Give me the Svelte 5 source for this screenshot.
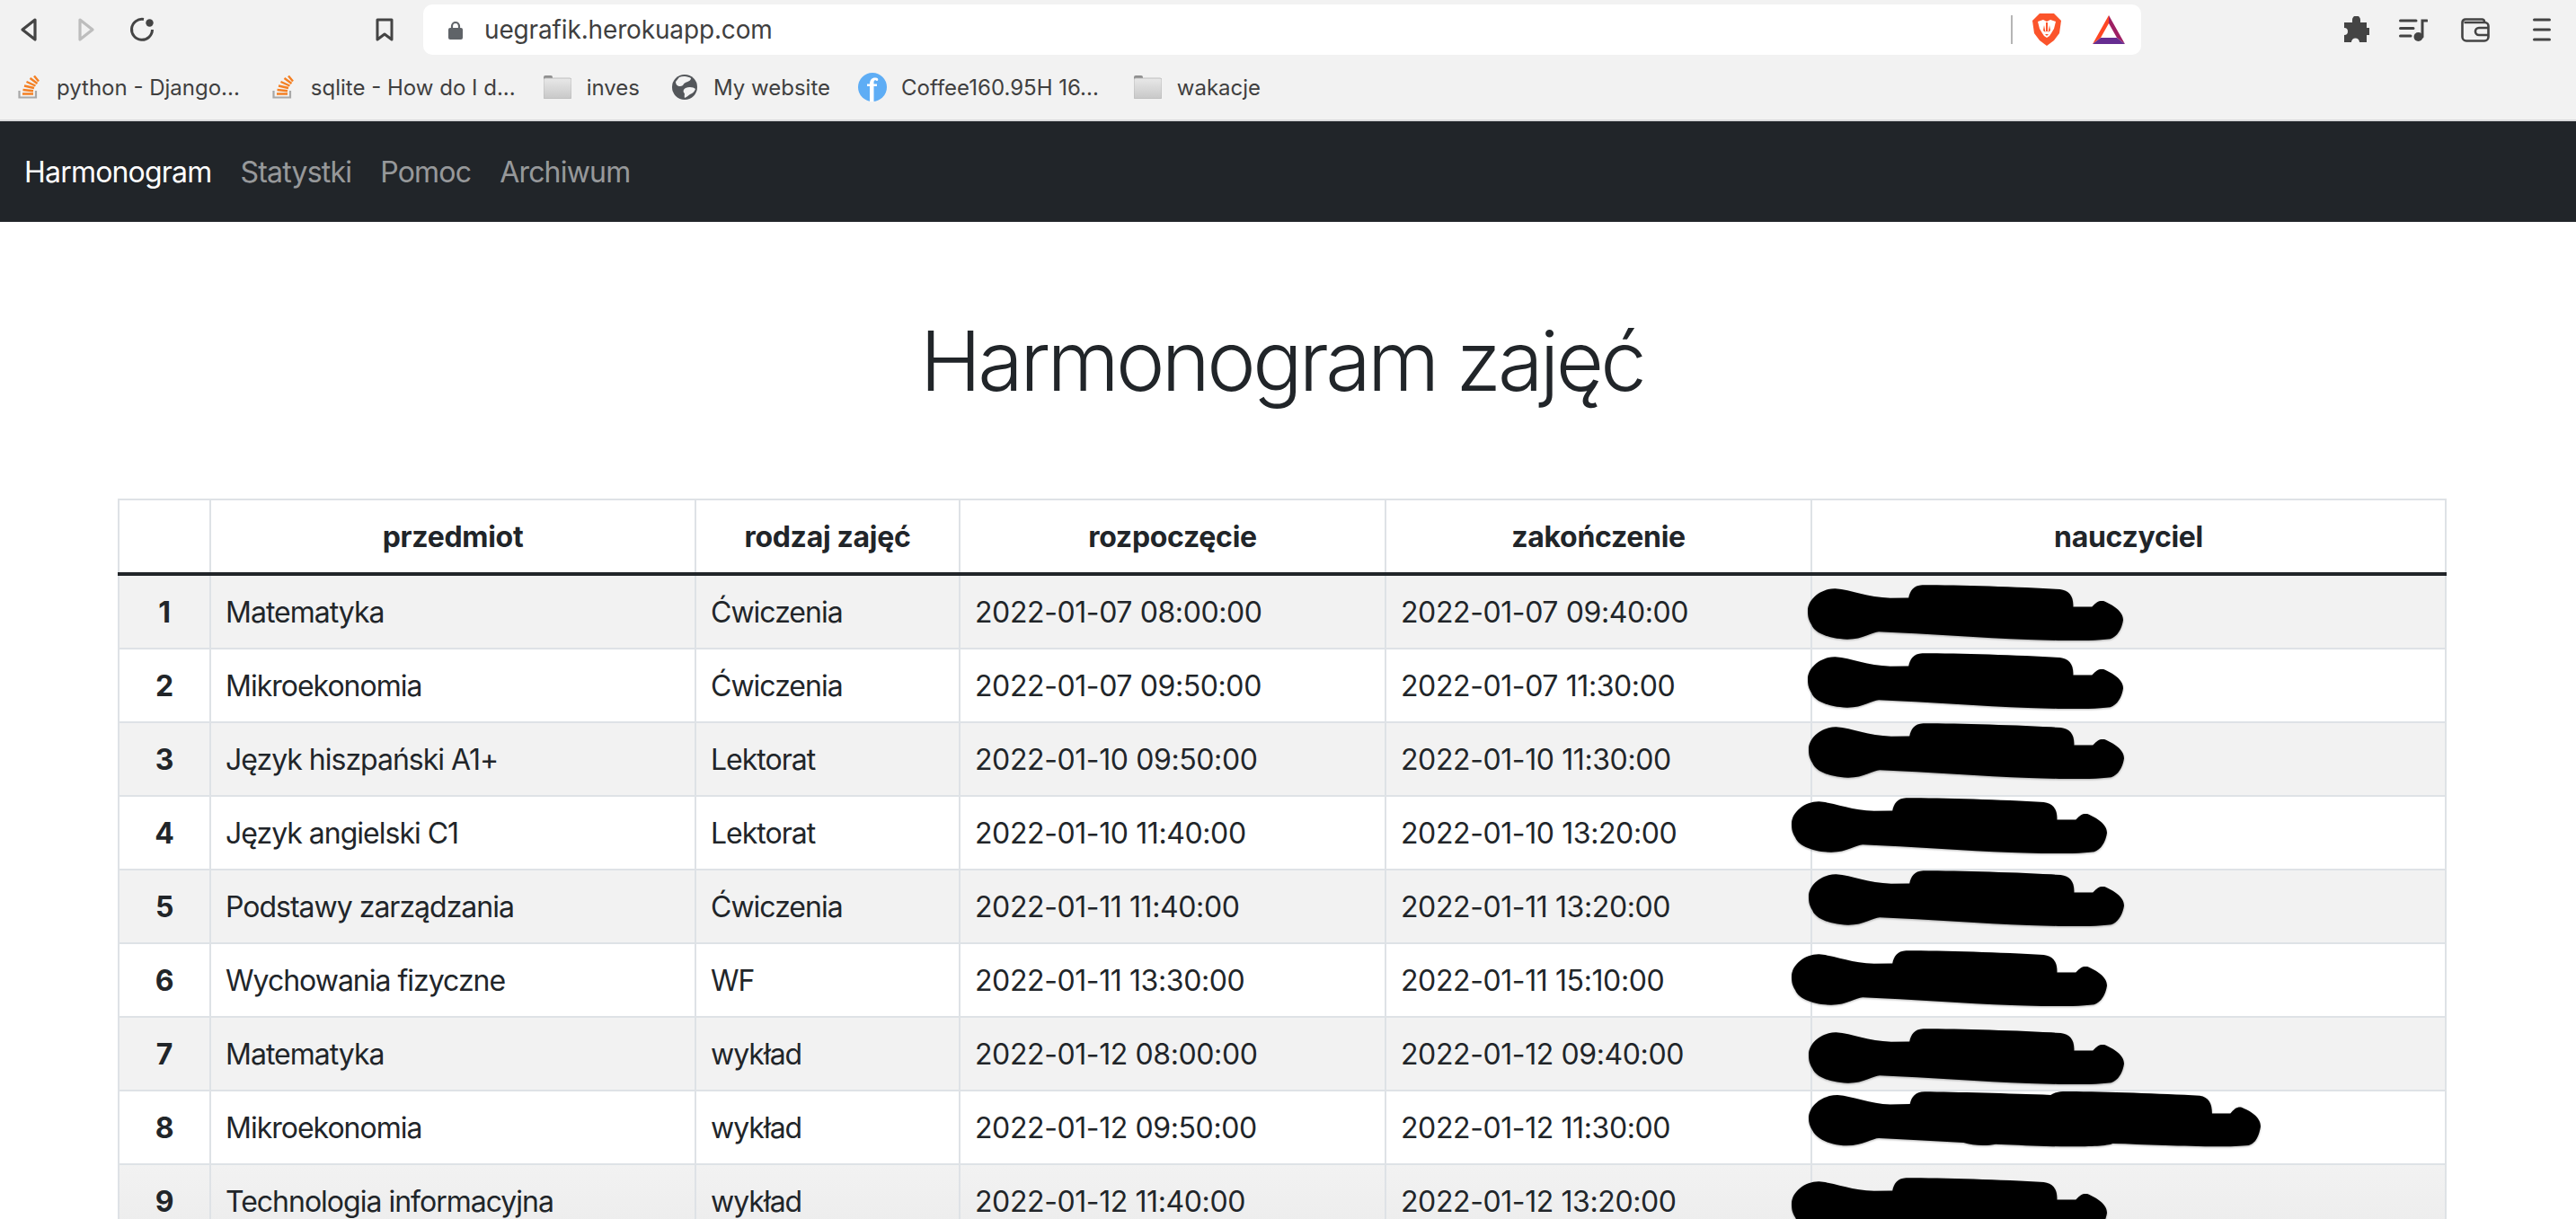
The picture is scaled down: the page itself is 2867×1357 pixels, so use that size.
<script>
	// bookmarks bar entries
	const bookmarks = [
		{ icon: 'so', label: 'python - Django...' },
		{ icon: 'so', label: 'sqlite - How do I d...' },
		{ icon: 'folder', label: 'inves' },
		{ icon: 'globe', label: 'My website' },
		{ icon: 'coffee', label: 'Coffee160.95H 16...' },
		{ icon: 'folder', label: 'wakacje' }
	];

	const columns = ['', 'przedmiot', 'rodzaj zajęć', 'rozpoczęcie', 'zakończenie', 'nauczyciel'];

	// dx, dy: where the black marker scribble sits in the teacher cell
	const rows = [
		{ subject: 'Matematyka', kind: 'Ćwiczenia', start: '2022-01-07 08:00:00', end: '2022-01-07 09:40:00', dx: -5, dy: 10 },
		{ subject: 'Mikroekonomia', kind: 'Ćwiczenia', start: '2022-01-07 09:50:00', end: '2022-01-07 11:30:00', dx: -5, dy: 4 },
		{ subject: 'Język hiszpański A1+', kind: 'Lektorat', start: '2022-01-10 09:50:00', end: '2022-01-10 11:30:00', dx: -4, dy: 0 },
		{ subject: 'Język angielski C1', kind: 'Lektorat', start: '2022-01-10 11:40:00', end: '2022-01-10 13:20:00', dx: -23, dy: 1 },
		{ subject: 'Podstawy zarządzania', kind: 'Ćwiczenia', start: '2022-01-11 11:40:00', end: '2022-01-11 13:20:00', dx: -4, dy: 0 },
		{ subject: 'Wychowania fizyczne', kind: 'WF', start: '2022-01-11 13:30:00', end: '2022-01-11 15:10:00', dx: -23, dy: 7 },
		{ subject: 'Matematyka', kind: 'wykład', start: '2022-01-12 08:00:00', end: '2022-01-12 09:40:00', dx: -4, dy: 12 },
		{ subject: 'Mikroekonomia', kind: 'wykład', start: '2022-01-12 09:50:00', end: '2022-01-12 11:30:00', dx: -4, dy: 0, long: true },
		{ subject: 'Technologia informacyjna', kind: 'wykład', start: '2022-01-12 11:40:00', end: '2022-01-12 13:20:00', dx: -23, dy: 14 }
	];
</script>

<div class="page">
	<header class="chrome">
		<div class="toolbar">
			<svg class="back" width="20" height="28" viewBox="0 0 20 28"><path d="M17 3 L3 14 L17 25 Z" fill="none" stroke="#444" stroke-width="3.2" stroke-linejoin="round" /></svg>
			<svg class="forward" width="20" height="28" viewBox="0 0 20 28"><path d="M3 3 L17 14 L3 25 Z" fill="none" stroke="#bdbdbd" stroke-width="3.2" stroke-linejoin="round" /></svg>
			<svg class="reload" width="28" height="28" viewBox="0 0 28 28"><path d="M16 2.5 A11.5 11.5 0 1 0 25.5 14" fill="none" stroke="#444" stroke-width="3" /><circle cx="22.5" cy="6.5" r="4.2" fill="#444" /></svg>
			<svg class="mark" width="22" height="26" viewBox="0 0 22 26"><path d="M3 2 H19 V24 L11 18 L3 24 Z" fill="none" stroke="#444" stroke-width="3" stroke-linejoin="round" /></svg>
			<div class="urlbar">
				<svg class="lock" width="16" height="21" viewBox="0 0 16 21"><path d="M4 9 V6 a4 4 0 0 1 8 0 V9" fill="none" stroke="#5f6368" stroke-width="2.2" /><rect x="0" y="8" width="16" height="13" rx="2" fill="#5f6368" /></svg>
				<span class="url">uegrafik.herokuapp.com</span>
				<span class="sep"></span>
				<svg class="brave" width="32" height="36" viewBox="0 0 32 36">
					<path d="M8 0 H24 L28 4 L32 8 L30 22 L24 30 L16 36 L8 30 L2 22 L0 8 L4 4 Z" fill="#fb542b" />
					<path d="M6 9 L12 7 L16 9 L20 7 L26 9 L24 17 L21 22 L19 25 L16 27 L13 25 L11 22 L8 17 Z" fill="#fff" />
					<path d="M13 13 L14.5 21 L12 19 Z M19 13 L17.5 21 L20 19 Z M14 23 H18 L16 25 Z M15 10 H17 V20 H15 Z" fill="#fb542b" />
				</svg>
				<svg class="bat" width="36" height="32" viewBox="0 0 36 32">
					<path d="M18 0 L36 32 L27 25 L18 9 Z" fill="#9e1f63" />
					<path d="M18 0 V9 L9 25 L0 32 Z" fill="#ff4724" />
					<path d="M9 25 H27 L36 32 H0 Z" fill="#662d91" />
				</svg>
			</div>
			<svg class="puzzle" width="30" height="30" viewBox="0 0 30 30"><path d="M11 4 a4.5 4.5 0 0 1 9 0 V7 H27 V13 H29 a4 4 0 0 1 0 8 H27 V29 H19 a4 4 0 0 0 -9 0 H2 V21 a4 4 0 0 0 0 -8 V7 H11 Z" fill="#444" /></svg>
			<svg class="playlist" width="32" height="25" viewBox="0 0 32 25"><path d="M1.5 2 H19 M1.5 10.5 H16 M1.5 19 H13" stroke="#444" stroke-width="3" stroke-linecap="round" fill="none" /><path d="M26 20 V2 H31" stroke="#444" stroke-width="3" stroke-linecap="round" fill="none" /><circle cx="21.5" cy="20" r="5" fill="#444" /></svg>
			<svg class="wallet" width="32" height="27" viewBox="0 0 32 27"><path d="M26 5 V4 a2.5 2.5 0 0 0 -2.5 -2.5 H5 A3.5 3.5 0 0 0 1.5 5 V21 A4.5 4.5 0 0 0 6 25.5 H26 A4.5 4.5 0 0 0 30.5 21 V9 A4 4 0 0 0 26.5 5 H3.5" fill="none" stroke="#444" stroke-width="2.6" /><path d="M30 11 H20 a4 4 0 0 0 0 8 H30" fill="none" stroke="#444" stroke-width="2.6" /></svg>
			<svg class="menu" width="20" height="26" viewBox="0 0 20 26"><path d="M1.5 2 H18.5 M1.5 13 H18.5 M1.5 24 H18.5" stroke="#444" stroke-width="3" stroke-linecap="round" /></svg>
		</div>

		<div class="bookmarks">
			{#each bookmarks as b}
				<div class="bookmark {b.icon}">
					{#if b.icon === 'so'}
						<svg width="24" height="26" viewBox="0 0 24 26">
							<path d="M1.5 17 V24.5 H20 V17" fill="none" stroke="#a8a8a8" stroke-width="2.2" />
							<path d="M5 20.5 H17 M5.5 16 L17 17.2 M7 11.5 L18 14 M9.5 7 L19.5 11.5 M13.5 3 L21.5 9 M18 0.5 L23 6.5" stroke="#f48024" stroke-width="2.4" fill="none" />
						</svg>
					{:else if b.icon === 'folder'}
						<svg width="31" height="26" viewBox="0 0 31 26">
							<defs>
								<linearGradient id="fold" x1="0" y1="0" x2="0" y2="1"><stop offset="0" stop-color="#e8e8e8" /><stop offset="1" stop-color="#c8c8c8" /></linearGradient>
							</defs>
							<path d="M0 2 a2 2 0 0 1 2 -2 H8 a2 2 0 0 1 2 2 H10 V4 H0 Z" fill="#8f8f8f" />
							<rect x="0" y="3" width="31" height="23" rx="2" fill="url(#fold)" stroke="#b4b4b4" stroke-width="0.8" />
						</svg>
					{:else if b.icon === 'globe'}
						<svg width="28" height="28" viewBox="0 0 28 28">
							<circle cx="14" cy="14" r="14" fill="#53565a" />
							<path d="M8 3 C12 1 18 2 21 4 C21 7 17 8 15 9 C12 10 13 13 9 13 C6 13 4 11 4 8 Z M15 15 C19 13 24 14 26 16 C25 19 23 21 20 22 C18 23 17 25 14 26 C13 23 15 22 13 20 C12 18 13 16 15 15 Z" fill="#f2f2f2" />
						</svg>
					{:else}
						<svg width="32" height="32" viewBox="0 0 32 32">
							<circle cx="16" cy="16" r="16" fill="#5eadf5" />
							<path d="M13 32 V15 H10 V12.5 H13 C13 7 16 5 20 5.5 C22.5 6 23 8 21.5 9 C20 9 20 8 18.8 8.3 C17.5 8.6 17.5 10 17.5 12.5 H21 V15 H17.5 V32 Z" fill="#fff" />
						</svg>
					{/if}
					<span>{b.label}</span>
				</div>
			{/each}
		</div>
	</header>

	<nav class="navbar">
		<a class="active" href="#top">Harmonogram</a>
		<a href="#top">Statystki</a>
		<a href="#top">Pomoc</a>
		<a href="#top">Archiwum</a>
	</nav>

	<h1>Harmonogram zajęć</h1>

	<table>
		<colgroup>
			<col style="width: 102px" />
			<col style="width: 540px" />
			<col style="width: 294px" />
			<col style="width: 474px" />
			<col style="width: 474px" />
			<col style="width: 706px" />
		</colgroup>
		<thead>
			<tr>
				{#each columns as c}
					<th>{c}</th>
				{/each}
			</tr>
		</thead>
		<tbody>
			{#each rows as r, i}
				<tr class:odd={i % 2 === 0} class:fade={i === 8}>
					<th>{i + 1}</th>
					<td class="word">{r.subject}</td>
					<td class="word">{r.kind}</td>
					<td class="date">{r.start}</td>
					<td class="date">{r.end}</td>
					<td class="teacher">
						{#if r.long}
							<svg class="scribble" style="left: {r.dx}px; top: {r.dy}px" width="503" height="62" viewBox="122 796 986 185" preserveAspectRatio="none">
								<path d="M122 885 C122 845 150 808 185 808 C220 812 255 838 300 839 L343 838 C346 815 355 797 375 797 C440 798 560 803 650 808 C660 797 670 796 690 796 C770 797 890 803 975 810 C995 815 1002 835 1002 869 L1042 869 C1050 855 1055 847 1065 848 C1085 860 1108 880 1108 912 C1105 940 1098 968 1082 975 C1040 982 960 978 900 975 C860 973 820 970 785 969 C770 980 700 980 640 978 C600 976 560 972 530 971 C510 978 480 976 460 966 C400 962 340 955 275 951 C260 952 240 976 205 976 C170 975 140 955 130 925 C124 910 122 900 122 885 Z" />
							</svg>
						{:else}
							<svg class="scribble" style="left: {r.dx}px; top: {r.dy}px" width="351" height="62" viewBox="120 363 688 185" preserveAspectRatio="none">
								<path d="M120 450 C120 410 150 375 180 376 C215 380 250 405 300 407 L340 406 C343 385 350 365 370 364 C450 364 580 370 670 378 C690 382 700 400 699 436 L740 436 C750 420 755 415 765 417 C785 430 808 450 808 480 C805 510 795 535 780 543 C740 552 650 548 600 545 C500 540 380 525 275 519 C260 520 240 545 205 544 C170 543 135 525 128 495 C122 480 120 470 120 450 Z" />
							</svg>
						{/if}
					</td>
				</tr>
			{/each}
		</tbody>
	</table>
</div>

<style>
	:global(body) {
		margin: 0;
		background: #fff;
		overflow: hidden;
	}

	.page {
		height: 1357px;
		overflow: hidden;
		font-family: Inter, "Liberation Sans", sans-serif;
		color: #212529;
	}

	/* browser chrome */
	.chrome {
		height: 133px;
		background: #f2f2f2;
		border-bottom: 2px solid #d9dadb;
		color: #444;
	}

	.toolbar {
		display: flex;
		align-items: center;
		height: 56px;
		padding-top: 5px;
		padding-left: 22px;
	}

	.forward { margin-left: 44px; }
	.reload { margin-left: 38px; }
	.mark { margin-left: 245px; }

	.urlbar {
		display: flex;
		align-items: center;
		width: 1912px;
		height: 56px;
		margin-left: 32px;
		padding-left: 28px;
		box-sizing: border-box;
		background: #fff;
		border-radius: 10px;
	}

	.url {
		margin-left: 24px;
		font-size: 28px;
		letter-spacing: -0.15px;
		color: #3f3f3f;
	}

	.sep {
		width: 2px;
		height: 32px;
		margin-left: auto;
		background: #b5b5b5;
	}

	.brave { margin-left: 22px; }
	.bat { margin-left: 35px; margin-right: 18px; }

	.puzzle { margin-left: 224px; }
	.playlist { margin-left: 33px; }
	.wallet { margin-left: 37px; }
	.menu { margin-left: 48px; }

	.bookmarks {
		display: flex;
		align-items: center;
		height: 72px;
		padding-left: 20px;
		font-size: 24px;
		color: #3f3f3f;
	}

	.bookmark {
		display: flex;
		align-items: center;
		gap: 19px;
		margin-right: 36px;
		white-space: nowrap;
	}

	.bookmark:nth-child(5) { margin-right: 39px; }
	.bookmark:nth-child(2), .bookmark:nth-child(4) { margin-right: 31px; }

	.bookmark.folder { gap: 17px; }
	.bookmark.globe { gap: 18px; }
	.bookmark.coffee { gap: 16px; }

	/* navbar */
	.navbar {
		display: flex;
		align-items: center;
		height: 112px;
		padding-left: 11px;
		background: #212529;
		font-size: 32px;
		letter-spacing: -0.8px;
	}

	.navbar a {
		padding: 0 16px;
		color: rgba(255, 255, 255, 0.55);
		text-decoration: none;
	}

	.navbar a.active {
		color: #fff;
	}

	h1 {
		margin: 100px 0 98px;
		padding-right: 14px;
		font-size: 92px;
		font-weight: 300;
		line-height: 1.2;
		letter-spacing: -3.7px;
		text-align: center;
	}

	/* table */
	table {
		width: 2590px;
		margin-left: 131px;
		table-layout: fixed;
		border-collapse: collapse;
		font-size: 32px;
		line-height: 48px;
	}

	th, td {
		padding: 17px 16px 15px;
		border: 2px solid #dee2e6;
		font-weight: 400;
		white-space: nowrap;
	}

	th {
		font-weight: 700;
		text-align: center;
		letter-spacing: -0.3px;
	}

	td.word {
		letter-spacing: -1px;
	}

	td.date {
		letter-spacing: -0.4px;
	}

	thead th {
		border-bottom: 4px solid #212529;
	}

	tr.odd {
		background: #f2f2f2;
	}

	tr.fade {
		background: linear-gradient(#f2f2f2, #ececec);
	}

	.teacher {
		position: relative;
	}

	.scribble {
		position: absolute;
		fill: #000;
		filter: drop-shadow(0 1px 1px rgba(0, 0, 0, 0.3));
	}
</style>
